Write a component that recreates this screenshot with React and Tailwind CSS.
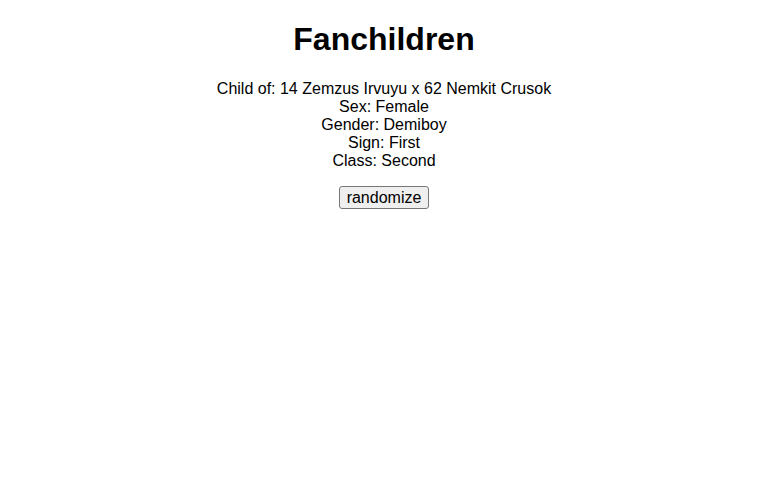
import React, { useState } from "react";

const SIGNS = ["First", "Second", "Third", "Fourth"];
const CLASSES = ["First", "Second", "Third"];

function App() {
  const [child] = useState({
    parents: "14 Zemzus Irvuyu x 62 Nemkit Crusok",
    sex: "Female",
    gender: "Demiboy",
    sign: SIGNS[0],
    klass: CLASSES[1],
  });

  return (
    <div className="min-h-screen bg-white text-black text-center font-['Liberation_Sans',Arial,sans-serif] text-[16px] leading-[18px]">
      <h1 className="text-[32px] leading-[37px] font-bold pt-[21px] mb-[22px]">Fanchildren</h1>
      <div className="mb-[16px]">
        <div>Child of: {child.parents}</div>
        <div>Sex: {child.sex}</div>
        <div>Gender: {child.gender}</div>
        <div>Sign: {child.sign}</div>
        <div>Class: {child.klass}</div>
      </div>
      <button className="border border-[#767676] rounded-[3px] bg-[#efefef] px-[7px] py-[1px] text-[16px] leading-[19px]">
        randomize
      </button>
    </div>
  );
}

export default App;
